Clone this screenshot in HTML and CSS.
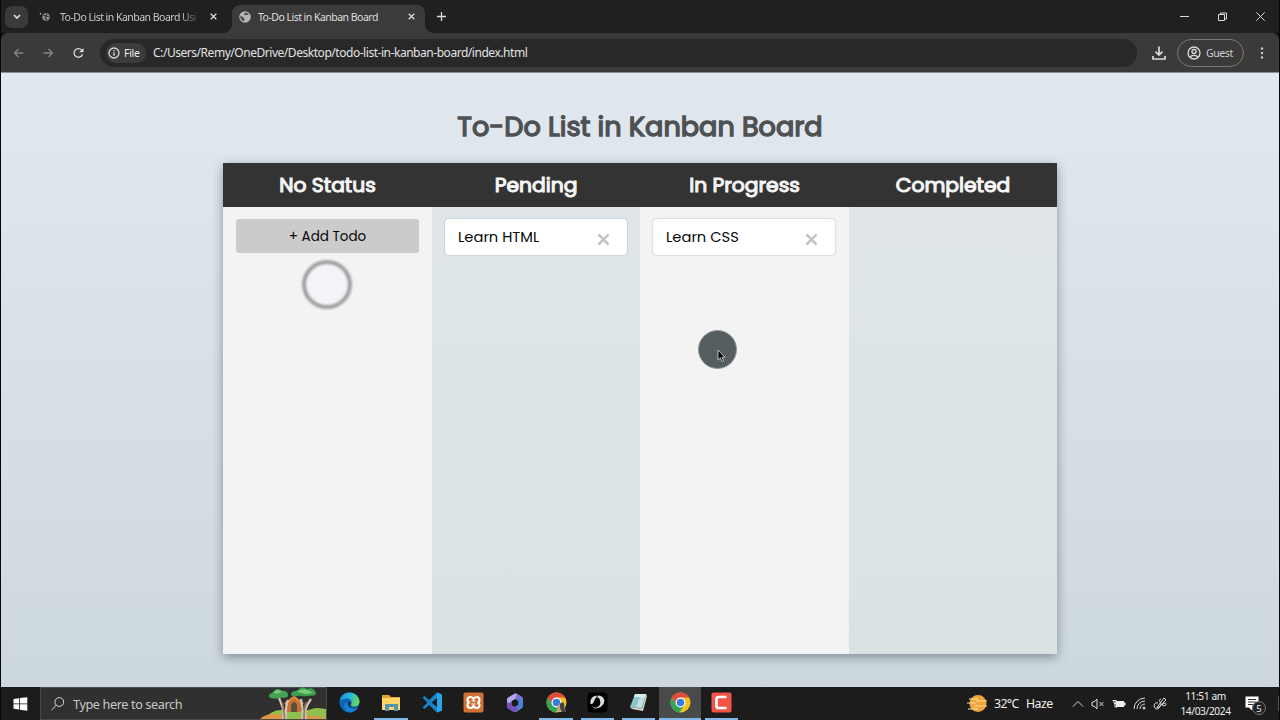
FILE: index.html
```html
<!DOCTYPE html>
<html lang="en">
<head>
<meta charset="utf-8">
<title>To-Do List in Kanban Board</title>
<link rel="stylesheet" href="styles.css">
</head>
<body>
<div class="screen">
  <header class="tabs">
    <button class="tab-search"><svg width="10" height="8" viewBox="0 0 10 8"><path d="M2 2l3 3 3-3" class="line bold"/></svg></button>
    <div class="tab tab-idle">
      <svg class="favicon" width="12" height="12" viewBox="0 0 12 12"><circle cx="7" cy="6" r="3.7" fill="#8f969b"/><path d="M4 4l3 1-1 2 2 2M8 3l-1 2 3 1" stroke="#30363b" fill="none" stroke-width="1.2"/><circle cx="1.5" cy="2.8" r=".8" fill="#ddd"/></svg>
      <span class="tab-title faded">To-Do List in Kanban Board Usi</span>
      <svg class="close" width="9" height="9" viewBox="0 0 9 9"><path d="M1.7 1.7l5.6 5.6M7.3 1.7L1.7 7.3" class="line"/></svg>
    </div>
    <div class="tab tab-active">
      <svg class="favicon" width="12" height="12" viewBox="0 0 12 12"><circle cx="6" cy="6" r="5.8" fill="#b4b7ba"/><path d="M1.200 5.300c1.600-.4 2.300.2 2.700 1 .5.900 1.600.8 1.700 1.700 0 .7-.5 1.300-.5 2.300C2.900 9.900 1.100 7.700 1.200 5.300zM6.200 1.500c1.600 0 2.800.9 3.500 2-.5.6-1.200.6-1.800.3-.7-.4-1 .9-2 .5-.8-.4-.6-2.300.3-2.800z" fill="#4b4c4e"/></svg>
      <span class="tab-title">To-Do List in Kanban Board</span>
      <svg class="close" width="9" height="9" viewBox="0 0 9 9"><path d="M1.700 1.700l5.600 5.600M7.300 1.700L1.700 7.300" class="line"/></svg>
    </div>
    <svg class="new-tab" width="11" height="11" viewBox="0 0 11 11"><path d="M5.500 1v9M1 5.500h9" class="line"/></svg>
    <div class="window-buttons">
      <svg width="11" height="11" viewBox="0 0 11 11"><path d="M1 5.500h9" class="line thin"/></svg>
      <svg width="11" height="11" viewBox="0 0 11 11"><path d="M1.500 3.500h6v6h-6zM3.500 3.500v-1.500h6v6h-2" class="line thin"/></svg>
      <svg width="11" height="11" viewBox="0 0 11 11"><path d="M1.300 1.300l8.400 8.400M9.700 1.300l-8.400 8.400" class="line thin"/></svg>
    </div>
  </header>

  <nav class="toolbar">
    <div class="nav-icons">
      <svg width="13" height="12" viewBox="0 0 13 12"><path d="M6.500 2L2.500 6l4 4M2.500 6H11.500" class="line dim"/></svg>
      <svg width="13" height="12" viewBox="0 0 13 12"><path d="M6.500 2l4 4-4 4M10.500 6H1.500" class="line dim"/></svg>
      <svg width="13" height="12" viewBox="0 0 13 12"><path d="M10.500 7.200A4.300 4.300 0 1 1 9.700 3.200L11 4.500" class="line"/><path d="M11.500 1v4.300H7.200z" fill="#ddd"/></svg>
    </div>
    <div class="address">
      <span class="file-chip"><svg width="12" height="12" viewBox="0 0 12 12"><circle cx="6" cy="6" r="5" class="line"/><path d="M6 5.300v3.500M6 3v1.300" class="line"/></svg>File</span>
      <span class="url">C:/Users/Remy/OneDrive/Desktop/todo-list-in-kanban-board/index.html</span>
    </div>
    <svg class="download" width="14" height="14" viewBox="0 0 14 14"><path d="M7 .5v8.300M3.500 5.600L7 9l3.500-3.400M1 10v3h12v-3" class="line bold"/></svg>
    <div class="guest"><svg width="14" height="14" viewBox="0 0 14 14"><circle cx="7" cy="7" r="6" class="line"/><circle cx="7" cy="5.500" r="2" class="line"/><path d="M3 11.300c1.500-2.500 6.500-2.500 8 0" class="line"/></svg><span>Guest</span></div>
    <svg class="menu-dots" width="4" height="14" viewBox="0 0 4 14"><g fill="#c8c8c8"><circle cx="2" cy="2.500" r="1.200"/><circle cx="2" cy="7" r="1.200"/><circle cx="2" cy="11.500" r="1.200"/></g></svg>
  </nav>

  <main class="page">
    <h1 class="page-title">To-Do List in Kanban Board</h1>
    <div class="board">
      <section class="column plain">
        <h2 class="column-title">No Status</h2>
        <div class="cards"><button class="add-todo">+ Add Todo</button></div>
        <div class="click-ring"></div>
      </section>
      <section class="column">
        <h2 class="column-title">Pending</h2>
        <div class="cards"><article class="card"><span>Learn HTML</span><svg width="13" height="13" viewBox="0 0 13 13"><path d="M1.500 1.500l10 10M11.500 1.500l-10 10"/></svg></article></div>
      </section>
      <section class="column plain">
        <h2 class="column-title">In Progress</h2>
        <div class="cards"><article class="card"><span>Learn CSS</span><svg width="13" height="13" viewBox="0 0 13 13"><path d="M1.500 1.500l10 10M11.500 1.500l-10 10"/></svg></article></div>
        <div class="pointer"><svg width="9" height="14" viewBox="0 0 9 14"><path d="M1 1v10l2.400-2.200L5 12.500l1.600-.8-1.600-3.500h3z" fill="#080808" stroke="#d8d8d8" stroke-width=".8"/></svg></div>
      </section>
      <section class="column">
        <h2 class="column-title">Completed</h2>
      </section>
    </div>
  </main>

  <footer class="taskbar">
    <div class="start"><svg width="15" height="14" viewBox="0 0 15 14"><path d="M.5 2L6 1.200v5.300H.5zM6.800 1.100L14.300.2v6.300H6.800zM.5 7.300H6v5.300l-5.500-.8zM6.800 7.300h7.500v6.400l-7.500-1z" fill="#fff"/></svg></div>
    <div class="search">
      <svg width="16" height="16" viewBox="0 0 16 16"><circle cx="9.300" cy="6" r="4.400" class="line thin"/><path d="M6.300 9.300L1.500 14" class="line thin"/></svg>
      <span>Type here to search</span>
      <svg class="trees" width="66" height="32" viewBox="0 0 66 32">
        <path d="M8 28c5-4 9-5 14-5h23c5 1 7-2 12-2 4 0 7 1 9 1v10H8z" fill="#8fc04a"/><path d="M0 32c5-5 13-6 21-4 5 1 4 4 6 4zM38 32c6-5 18-4 28-1v1z" fill="#dd9548"/>
        <path d="M27 25V15l7-6 7 6v10z" fill="#c8702f"/><path d="M31 25v-7q3-6 6 0v7z" fill="#56503c"/><path d="M25 17l9-7 9 7" fill="none" stroke="#d78643" stroke-width="2.500"/>
        <path d="M23 32c2-8-1-13-4-21M26 32c0-8-1-12 2-19M42 32c2-8 0-12-1-20M46 32c-2-8 0-13 5-20" fill="none" stroke="#d3c4ba" stroke-width="2.200"/><path d="M24.500 32c0-6-1-11-2-16M44 32c0-8 0-12 2-17" fill="none" stroke="#946f5c" stroke-width="1.500"/>
        <path d="M9 9c0-3 3-2 5-5 3-3 6-2 8 0 3-1 6 1 6 4 0 4-5 2-8 3-4 1-11 1-11-2z" fill="#43a352"/><path d="M31 7c1-4 4-2 7-4 3-4 7-3 9-1 4-2 8 0 9 4 0 4-5 2-9 3-4 1-6-1-9 0-4 1-7 0-7-2z" fill="#3b9e50"/><path d="M13 6c3-4 6-3 9-1l-4 1.500zM37 5c5-4 11-3 16 1l-7 1z" fill="#7ccc78"/>
      </svg>
    </div>
    <div class="apps">
      <div class="app"><svg width="21" height="21" viewBox="0 0 21 21"><defs><linearGradient id="edge" x2="1" y2=".3"><stop stop-color="#168dda"/><stop offset=".55" stop-color="#25b8d8"/><stop offset="1" stop-color="#65d65b"/></linearGradient></defs><circle cx="10.500" cy="10.500" r="10" fill="#0b65b4"/><path d="M.7 9C1.500 3 6 .5 10.500.5c6 0 10 4.500 10 9 0 4-3 5-5.500 5-3 0-3.500-1.500-2.700-2.500C14 8 10 6.500 8 6.600 4 6.700 1 9 .7 9z" fill="url(#edge)"/><path d="M8.500 10c-1.500 4.500 3.500 8.500 10.500 5.600-1.600 3-5 4.900-8.500 4.900C3 19 4.500 11 8.500 10z" fill="#1681d0"/><path d="M9 10c-1 4 3.500 7.500 10 5.600l.7-1c-1.500 1-3 1.200-4.700 1-3-.4-4.600-1.700-2.700-3.600C12 10 10 9 9 10z" fill="#173554"/></svg></div>
      <div class="app running"><svg width="20" height="18" viewBox="0 0 20 18"><path d="M1 1h7l2 2h9v13H1z" fill="#e3a62f"/><path d="M1 4h18v12H1z" fill="#ffd56a"/><path d="M4 17v-7h13v7h-4v-4H8v4z" fill="#5795af"/></svg></div>
      <div class="app"><svg width="21" height="21" viewBox="0 0 21 21"><path d="M15 .5l5 2v16l-5 2-8-7.500L2.500 17 .5 15.500 5.500 10.500.5 5.500 2.500 4 7 8zM15 6L9.500 10.500 15 15z" fill="#1685cc"/><path d="M15 .5l5 2v16l-5 2z" fill="#2aa4e8"/></svg></div>
      <div class="app"><svg width="21" height="21" viewBox="0 0 21 21"><rect x=".5" y=".5" width="20" height="20" rx="2" fill="#cf7135"/><path d="M7.500 5c-2 0-3 1-3 2.700s1 2.800 2.300 2.800C5 10.500 4.500 12 4.500 13.300c0 2 1.200 2.700 3 2.700 2 0 2.500-1 3-2 .5 1 1 2 3 2 1.800 0 3-.7 3-2.700 0-1.300-.5-2.800-2.300-2.800 1.300 0 2.300-1.100 2.300-2.800S15.500 5 13.500 5s-2.500 1-3 2c-.5-1-1-2-3-2z" fill="none" stroke="#fff" stroke-width="2.100"/><path d="M8.500 9h4M8.500 12h4" stroke="#fff" stroke-width="1.200"/></svg></div>
      <div class="app"><svg width="20" height="20" viewBox="0 0 20 20"><path d="M10 .5q1-.3 2 .3l5 3q1 .8 1 2v7q0 1.400-1 2l-5 3.700q-2 1-4 0l-5-3q-1-.8-1-2V6.300q0-1.200 1-1.900zM10 6L6.500 8v4.200L10 14l3.500-2V8z" fill="#8370d2" fill-rule="evenodd"/><path d="M18 6v7.500l-1 1.500-6 4q-2 .5-3-.5l-1-4.500 3 0 3.500-2V8l-2-3z" fill="#4a83dc"/><path d="M2 10l4.500-1v3.200L10 14l3 2-3 3-2-.5-5-3-1-2z" fill="#7b4fba"/><path d="M10 .5L3 4.700 2 6v4l4.500-1V8L10 6l2-5z" fill="#b0a9ec"/></svg></div>
      <div class="app running"><svg width="21" height="21" viewBox="0 0 21 21"><use href="#chrome"/><path d="M12 20c-1-3-1-5 1-8 2-2 4-1 5 0l2 8z" fill="#b7a58d"/><path d="M14 12c3-3 5-1 4 3l2 5h-4l-2-4z" fill="#4b403c"/></svg></div>
      <div class="app running"><svg width="21" height="21" viewBox="0 0 21 21"><rect x=".5" y=".5" width="20" height="20" rx="4" fill="#000"/><path d="M3.500 12C2.500 7 6 3.500 10 3.500L9 6c-2 1-1 4-4 6zM11 3.500c6 0 8 6 5 9-2 3-5 4-7 3 4-1 5-4 4-7-.5-2-1-3-3-3z" fill="#d7dcdf"/><path d="M4 13l3 2 4 1-3 1z" fill="#838b90"/></svg></div>
      <div class="app running"><svg width="21" height="21" viewBox="0 0 21 21"><path d="M7 2h11l-4 15-12-2z" fill="#8ec3cd"/><path d="M7 2h11l-1 3H6z" fill="#d8edf0"/><path d="M2 15l12 2 4-15 1 2-4 15-11-2z" fill="#e2d8c6"/><path d="M12 5L8 15l5 1 4-11z" fill="#c2e0e3"/></svg></div>
      <div class="app running selected"><svg width="21" height="21" viewBox="0 0 21 21"><g id="chrome"><circle cx="10.500" cy="10.500" r="10" fill="#f2c31e"/><path d="M1.800 5.500A10 10 0 0 1 19.200 5.500H10.500L6 12.800z" fill="#df4b3c"/><path d="M1.800 5.500A10 10 0 0 0 9.500 20.500l5-7.500-8.500-1z" fill="#35a455"/><circle cx="10.500" cy="10.500" r="5" fill="#fff"/><circle cx="10.500" cy="10.500" r="3.800" fill="#357ee0"/></g></svg></div>
      <div class="app running"><svg width="21" height="21" viewBox="0 0 21 21"><rect x=".5" y=".5" width="20" height="20" rx="2" fill="#f25448"/><path d="M15.500 5H8Q5.500 5 5.500 7v7q0 2 2.500 2h7.500" fill="none" stroke="#fff" stroke-width="2.700"/></svg></div>
    </div>
    <div class="tray">
      <svg class="weather" width="21" height="19" viewBox="0 0 21 19"><circle cx="11" cy="9.500" r="8.500" fill="#eea43b"/><path d="M2 5h9M0 9h9M9 7h11M7 12h13M1 15h10" stroke="#ffe0a1" stroke-width="1.200"/></svg>
      <span class="temperature">32°C</span><span class="haze">Haze</span>
      <div class="tray-icons">
        <svg width="12" height="10" viewBox="0 0 12 10"><path d="M1 7.500L6 2.500l5 5" class="line thin"/></svg>
        <svg width="14" height="12" viewBox="0 0 14 12"><path d="M1 4h2l3-3v10L3 8H1zM8.500 4l4 4M12.500 4l-4 4" class="line thin"/></svg>
        <svg width="14" height="12" viewBox="0 0 14 12"><path d="M4 3h8v1.500h1.500v3H12V9H4z" fill="#eee"/><path d="M.5 2.500h4M1 4h3v1.500H2M3 5.500V9h2" fill="none" stroke="#eee"/></svg>
        <svg width="13" height="13" viewBox="0 0 13 13"><path d="M1 12A11 11 0 0 1 12 1M4 12A8 8 0 0 1 12 4M7 12A5 5 0 0 1 12 7" class="line thin"/><circle cx="11" cy="11" r="1.500" fill="#bbb"/></svg>
        <svg width="15" height="15" viewBox="0 0 15 15"><path d="M5 10L11 2l2 2-7 7-2 1zM5 7C2 6 0 9 2 12c2 3 6-1 6-4-1-3-3-4 0-5M9 9c2-3 5-2 4 0-1 1-3 1-4 0" class="line thin"/></svg>
      </div>
      <div class="clock"><span class="time">11:51 am</span><span>14/03/2024</span></div>
      <div class="notifications"><svg width="15" height="15" viewBox="0 0 15 15"><path d="M.500 .5h13v11H7v3l-3-3H.500z" fill="#fff"/><path d="M3 3.500h8M3 6h8M3 8.500h5" stroke="#333"/></svg><span>5</span></div>
    </div>
  </footer>
</div>
</body>
</html>
```
FILE: styles.css
```css
* { box-sizing: border-box; }
body { margin: 0; background: #050708; overflow: hidden; font-family: "Noto Sans", "Open Sans", sans-serif; }
svg { display: block; flex: none; }
button { border: 0; padding: 0; font: inherit; }
.screen { width: 1280px; height: 720px; padding: 0 1px; display: grid; grid-template-rows: 33px 39px 615px 33px; }
.line { fill: none; stroke: #dadada; stroke-width: 1.3; }
.bold { stroke-width: 1.7; }
.thin { stroke-width: 1; }
.dim { stroke: #858585; }

.tabs { display: flex; align-items: center; background: #202020; color: #dedede; font-size: 10.5px; white-space: nowrap; }
.tab-search { display: grid; place-items: center; width: 23px; height: 22px; margin-left: 4px; border-radius: 7px; background: #3a3a3a; }
.tab { display: flex; align-items: center; height: 28px; margin-top: 5px; padding-bottom: 5px; }
.tab-idle { width: 190px; margin-left: 10px; color: #c8c8c8; }
.tab-idle .favicon { margin: 0 9px 0 1px; }
.tab-active { position: relative; width: 193px; margin-left: 4px; padding-left: 7px; border-radius: 8px 8px 0 0; background: #3b3b3b; }
.tab-active::before, .tab-active::after { content: ""; position: absolute; bottom: 0; width: 8px; height: 8px; }
.tab-active::before { left: -8px; background: radial-gradient(circle at 0 0, transparent 7.5px, #3b3b3b 8px); }
.tab-active::after { right: -8px; background: radial-gradient(circle at 100% 0, transparent 7.5px, #3b3b3b 8px); }
.tab-active .favicon { margin-right: 7px; }
.tab-title { width: 142px; letter-spacing: -.52px; }
.faded { mask-image: linear-gradient(90deg, #000 85%, transparent 99%); }
.close { margin-left: auto; }
.tab-idle .close { margin-right: 10px; }
.tab-active .close { margin-right: 9px; }
.new-tab { margin-left: 11px; }
.window-buttons { display: flex; gap: 27px; margin-left: auto; margin-right: 13px; }

.toolbar { display: flex; align-items: center; background: #3b3a39; padding-left: 11px; border-radius: 6px 6px 0 0; }
.nav-icons { display: flex; gap: 17px; width: 88px; }
.address { display: flex; align-items: center; width: 1037px; height: 28px; border-radius: 14px; padding-left: 6px; background: #282828; }
.file-chip { display: flex; align-items: center; gap: 4px; height: 20px; width: 40px; padding-left: 2px; border-radius: 10px; background: #3c3c3c; color: #eee; font-size: 10.500px; letter-spacing: -.3px; }
.url { margin-left: 7px; color: #e2e2e2; font-size: 12px; letter-spacing: -.46px; white-space: nowrap; }
.download { margin-left: 15px; }
.guest { display: flex; align-items: center; gap: 5px; width: 67px; height: 28px; margin-left: 11px; padding-left: 9px; border: 1px solid #777; border-radius: 14px; font-size: 10.500px; letter-spacing: -.4px; color: #cfcfcf; }
.menu-dots { margin-left: 16px; }

.page { display: flex; flex-direction: column; align-items: center; border-top: 1px solid #8c9092; background: linear-gradient(#e2e8f0, #cdd8de); font-family: "Poppins", Inter, sans-serif; }
.page-title { margin: 33px 0 16px; font-size: 27.100px; line-height: 41px; font-weight: 400; -webkit-text-stroke: 1.400px #4e5153; color: #4e5153; white-space: nowrap; }
.board { display: grid; grid-template-columns: 209px 208px 209px 208px; width: 834px; height: 491px; box-shadow: 0 3px 10px rgba(45, 55, 70, .48); }
.column { position: relative; background: linear-gradient(#e0e6ea, #dae2e3); }
.plain { background: #f3f3f3; }
.column-title { display: grid; place-items: center; height: 44px; margin: 0; background: #333; color: #f5f5f5; font-size: 20.300px; font-weight: 400; line-height: 30px; padding-bottom: 1px; -webkit-text-stroke: 1.100px #f5f5f5; white-space: nowrap; }
.cards { padding: 12px 13px; }
.add-todo { display: block; width: 183px; height: 34px; border-radius: 3px; background: #cbcbcb; color: #080808; font-size: 13.500px; padding-top: 1px; }
.card { display: flex; align-items: center; justify-content: space-between; width: 182px; height: 36px; padding: 1px 17px 0 13px; border-radius: 4px; background: #fff; box-shadow: 0 0 2px #a3acb0; color: #080808; font-size: 14.700px; }
.card svg { margin-top: 3px; fill: none; stroke: #c5c5c5; stroke-width: 2.500; }
.click-ring { position: absolute; left: 79px; top: 97px; width: 50px; height: 49px; border: 4px solid #a0a0a0; border-radius: 50%; background: #f3f3f8; filter: blur(.8px); }
.pointer { position: absolute; left: 58px; top: 167px; width: 39px; height: 39px; border: 1px solid #92989a; border-radius: 50%; background: #555d60; }
.pointer svg { margin: 18px 0 0 18px; }

.taskbar { display: flex; align-items: stretch; background: #1c1c1c; color: #eee; white-space: nowrap; }
.start { display: grid; place-items: center; width: 39px; }
.search { display: flex; align-items: center; width: 287px; padding-left: 9px; border: 1px solid #484848; background: #303030; color: #c7c7c7; font-size: 12.700px; }
.search > span { margin-left: 7px; letter-spacing: -.4px; }
.trees { margin-left: auto; align-self: end; }
.apps { display: grid; grid-template-columns: repeat(10, 41.300px); margin-left: 2px; }
.app { display: grid; place-items: center; border-bottom: 2px solid transparent; }
.running { border-image: linear-gradient(90deg, transparent 4px, #80b9e9 4px, #80b9e9 calc(100% - 4px), transparent calc(100% - 4px)) 0 0 2; }
.selected { background: #494b4b; border-image: none; border-bottom-color: #80b9e9; }
.tray { display: flex; align-items: center; margin-left: auto; font-size: 12.300px; }
.temperature { margin-left: 6px; width: 32px; letter-spacing: -.6px; }
.haze { width: 46px; letter-spacing: -.5px; }
.tray-icons { display: flex; align-items: center; gap: 7px; width: 97px; }
.clock { display: grid; justify-items: center; width: 55px; margin-left: 9px; font-size: 10.200px; line-height: 15px; letter-spacing: -.4px; }
.notifications { position: relative; width: 34px; margin-left: 12px; border-right: 1px solid #565656; }
.notifications span { position: absolute; left: 7px; top: 5px; display: grid; place-items: center; width: 14px; height: 14px; border: 1px solid #777; border-radius: 50%; background: #242424; font-size: 9.500px; }
```
